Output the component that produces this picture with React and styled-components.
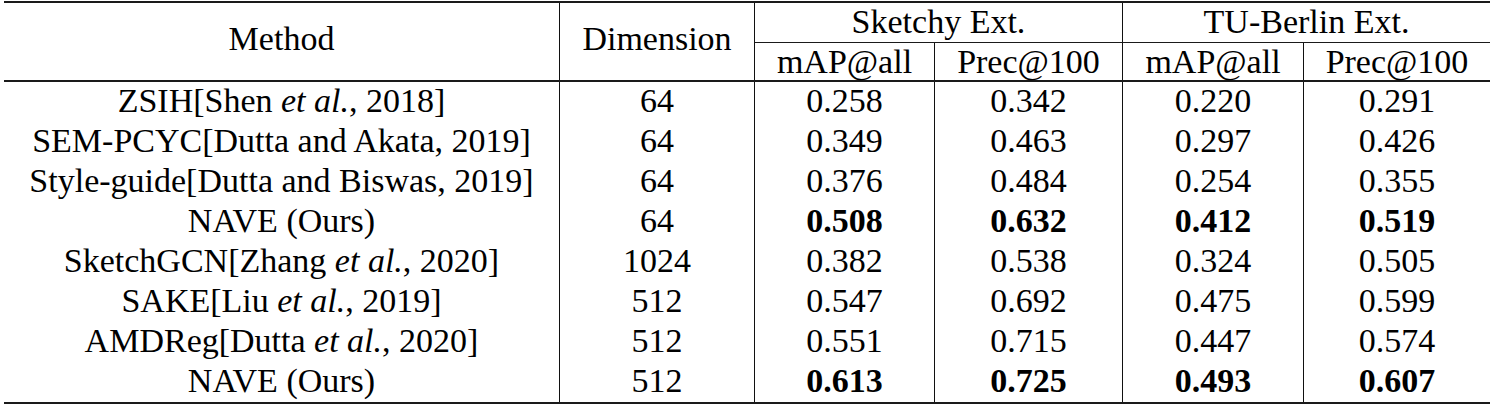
import React from "react"
import styled, { createGlobalStyle } from "styled-components"

const GlobalStyle = createGlobalStyle`
  body {
    margin: 0;
    background: #ffffff;
  }
`

const COLUMNS = "555px 195px 180px 188px 181px 187px"

const rows = [
    { method: "ZSIH[Shen", cite: "2018]", dim: "64", vals: ["0.258", "0.342", "0.220", "0.291"] },
    { method: "SEM-PCYC[Dutta and Akata, 2019]", dim: "64", vals: ["0.349", "0.463", "0.297", "0.426"] },
    { method: "Style-guide[Dutta and Biswas, 2019]", dim: "64", vals: ["0.376", "0.484", "0.254", "0.355"] },
    { method: "NAVE (Ours)", dim: "64", vals: ["0.508", "0.632", "0.412", "0.519"], best: true },
    { method: "SketchGCN[Zhang", cite: "2020]", dim: "1024", vals: ["0.382", "0.538", "0.324", "0.505"] },
    { method: "SAKE[Liu", cite: "2019]", dim: "512", vals: ["0.547", "0.692", "0.475", "0.599"] },
    { method: "AMDReg[Dutta", cite: "2020]", dim: "512", vals: ["0.551", "0.715", "0.447", "0.574"] },
    { method: "NAVE (Ours)", dim: "512", vals: ["0.613", "0.725", "0.493", "0.607"], best: true },
]

export default function App() {
    return (
        <>
            <GlobalStyle />
            <Page>
                <Table>
                    <Head>
                        <Cell $rows={2} $middle>Method</Cell>
                        <Cell $rows={2} $line $middle>Dimension</Cell>
                        <Cell $span={2} $line $cline>Sketchy Ext.</Cell>
                        <Cell $span={2} $line $cline>TU-Berlin Ext.</Cell>
                        <Cell $line>mAP@all</Cell>
                        <Cell $line>Prec@100</Cell>
                        <Cell $line>mAP@all</Cell>
                        <Cell $line>Prec@100</Cell>
                    </Head>
                    <Body>
                        {rows.map((r, i) => (
                            <React.Fragment key={i}>
                                <Cell>
                                    <span>
                                        {r.method}
                                        {r.cite && <> <Em>et al.</Em>, {r.cite}</>}
                                    </span>
                                </Cell>
                                <Cell $line>{r.dim}</Cell>
                                {r.vals.map((v, j) => (
                                    <Cell key={j} $line $bold={r.best}>{v}</Cell>
                                ))}
                            </React.Fragment>
                        ))}
                    </Body>
                </Table>
            </Page>
        </>
    )
}

const Page = styled.div`
padding: 1px 0 0 4px;
font-family: "Liberation Serif", "Times New Roman", serif;
font-size: 34px;
color: #000000;
`

const Table = styled.div`
width: 1486px;
border-top: 2px solid #1a1a1a;
`

const Head = styled.div`
display: grid;
grid-template-columns: ${COLUMNS};
grid-template-rows: 40px 37px;
border-bottom: 2px solid #1a1a1a;
`

const Body = styled.div`
display: grid;
grid-template-columns: ${COLUMNS};
grid-auto-rows: 40px;
border-bottom: 2px solid #1a1a1a;
`

const Cell = styled.div`
grid-column: span ${p => p.$span || 1};
grid-row: span ${p => p.$rows || 1};
display: flex;
justify-content: center;
align-items: ${p => p.$middle ? "center" : "flex-start"};
padding-bottom: ${p => p.$middle ? "6px" : "0"};
line-height: 38px;
white-space: nowrap;
font-weight: ${p => p.$bold ? 700 : 400};
border-left: ${p => p.$line ? "1px solid #111111" : "none"};
border-bottom: ${p => p.$cline ? "1px solid #1a1a1a" : "none"};
`

const Em = styled.i`
font-style: italic;
`
